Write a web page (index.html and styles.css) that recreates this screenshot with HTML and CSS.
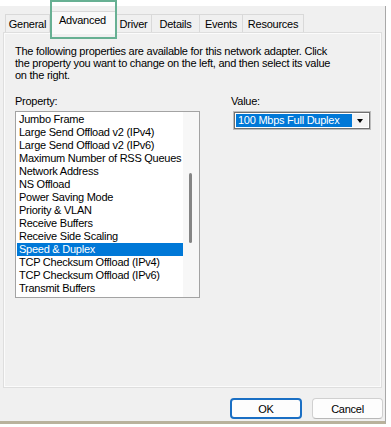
FILE: index.html
```html
<!DOCTYPE html>
<html lang="en">
<head>
    <meta charset="UTF-8">
    <title>Network Adapter Properties</title>
    <link rel="stylesheet" href="styles.css">
</head>
<body>
    <div class="dialog">
        <div class="tabs">
            <div class="tab tab-general">General</div>
            <div class="tab tab-advanced active">Advanced<span class="focus-mark"></span></div>
            <div class="tab tab-driver">Driver</div>
            <div class="tab tab-details">Details</div>
            <div class="tab tab-events">Events</div>
            <div class="tab tab-resources">Resources</div>
        </div>

        <div class="panel">
            <p class="intro">The following properties are available for this network adapter. Click the property you want to change on the left, and then select its value on the right.</p>

            <div class="fields">
                <div class="field">
                    <div class="label">Property:</div>
                    <div class="listbox">
                        <ul class="items">
                            <li>Jumbo Frame</li>
                            <li>Large Send Offload v2 (IPv4)</li>
                            <li>Large Send Offload v2 (IPv6)</li>
                            <li>Maximum Number of RSS Queues</li>
                            <li>Network Address</li>
                            <li>NS Offload</li>
                            <li>Power Saving Mode</li>
                            <li>Priority &amp; VLAN</li>
                            <li>Receive Buffers</li>
                            <li>Receive Side Scaling</li>
                            <li class="selected">Speed &amp; Duplex</li>
                            <li>TCP Checksum Offload (IPv4)</li>
                            <li>TCP Checksum Offload (IPv6)</li>
                            <li>Transmit Buffers</li>
                        </ul>
                        <div class="scrollbar"><div class="thumb"></div></div>
                    </div>
                </div>

                <div class="field value-field">
                    <div class="label">Value:</div>
                    <div class="combo">
                        <span class="combo-text">100 Mbps Full Duplex</span>
                        <span class="combo-btn"><span class="arrow"></span></span>
                    </div>
                </div>
            </div>
        </div>

        <div class="buttons">
            <button class="btn default">OK</button>
            <button class="btn">Cancel</button>
        </div>
    </div>
</body>
</html>
```

FILE: styles.css
```css
body {
    margin: 0;
    background-color: #fff;
    font-family: "Liberation Sans", Arial, sans-serif;
    font-size: 11px;
    letter-spacing: -0.25px;
    color: #000;
}
.dialog {
    margin-top: 6px;
    width: 386px;
    height: 418px;
    box-sizing: border-box;
    background-color: #f0f0f0;
    border-right: 1px solid #a8a8a8;
    border-bottom: 3px solid #b9b29c;
    padding-top: 8px;
}
.tabs {
    display: flex;
    align-items: flex-end;
    padding-left: 5px;
    height: 18px;
}
.tab {
    position: relative;
    height: 18px;
    box-sizing: border-box;
    text-align: center;
    line-height: 18px;
    border: 1px solid #d9d9d9;
    border-bottom: none;
    border-left: none;
    background-color: #f0f0f0;
}
.tab-general { width: 45px; border-left: 1px solid #d9d9d9; }
.tab-advanced { width: 66px; }
.tab-driver { width: 36px; }
.tab-details { width: 48px; }
.tab-events { width: 43px; }
.tab-resources { width: 61px; }

.tab.active {
    height: 22px;
    line-height: 17px;
    margin-bottom: -1px;
    background-color: #f9f9f9;
    z-index: 1;
}
.focus-mark {
    position: absolute;
    left: 0;
    top: -12px;
    width: 63px;
    height: 35px;
    border: 2px solid #67b093;
}
.panel {
    margin: 0 3px;
    height: 356px;
    box-sizing: border-box;
    border: 1px solid #dedede;
    box-shadow: inset 0 0 0 1px #fbfbfb;
    padding: 12px 11px 0 11px;
}
.intro {
    margin: 0;
    line-height: 12px;
    padding-right: 30px;
}
.fields {
    display: grid;
    grid-template-columns: 185px 1fr;
    gap: 31px;
    margin-top: 14px;
}
.label {
    line-height: 12px;
    margin-bottom: 4px;
}
.listbox {
    display: flex;
    height: 185px;
    border: 1px solid #a3a3a3;
    background-color: #fff;
    overflow: hidden;
}
.items {
    flex: 1;
    list-style: none;
    margin: 0;
    padding: 1px 0 0 1px;
}
.items li {
    height: 13px;
    line-height: 13px;
    padding-left: 2px;
    white-space: nowrap;
}
.items li.selected {
    background-color: #0078d7;
    color: #fff;
}
.scrollbar {
    width: 16px;
    background-color: #f7f7f7;
    position: relative;
}
.thumb {
    position: absolute;
    left: 6px;
    top: 61px;
    width: 3px;
    height: 70px;
    border-radius: 2px;
    background-color: #858585;
}
.combo {
    display: flex;
    width: 138px;
    height: 19px;
    box-sizing: border-box;
    margin-left: 2px;
    border: 1px solid #bcbcbc;
    box-shadow: inset 0 0 0 1px #6f6f6f;
    background-color: #fff;
    padding: 2px;
}
.combo-text {
    flex: 1;
    background-color: #0078d7;
    color: #fff;
    line-height: 13px;
    padding-left: 2px;
    white-space: nowrap;
}
.combo-btn {
    width: 16px;
    display: flex;
    justify-content: center;
    align-items: center;
    background-color: #f3f3f3;
}
.arrow {
    width: 0;
    height: 0;
    border-left: 3.5px solid transparent;
    border-right: 3.5px solid transparent;
    border-top: 4px solid #000;
}
.buttons {
    display: flex;
    justify-content: flex-end;
    gap: 10px;
    padding: 10px 2px 0 0;
}
.btn {
    width: 71px;
    height: 21px;
    box-sizing: border-box;
    font-family: inherit;
    font-size: 11px;
    letter-spacing: -0.25px;
    color: #000;
    background-color: #fdfdfd;
    border: 1px solid #d0d0d0;
    border-bottom-color: #b8b8b8;
    border-radius: 4px;
    padding: 0;
}
.btn.default {
    border: 2px solid #1a6fc4;
    width: 72px;
}
```
